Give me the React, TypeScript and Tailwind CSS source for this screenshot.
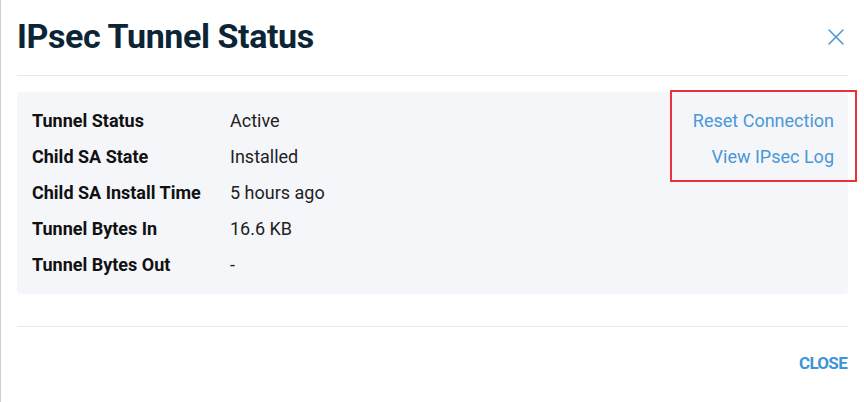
import { X } from "lucide-react";

const rows = [
  { label: "Tunnel Status", value: "Active" },
  { label: "Child SA State", value: "Installed" },
  { label: "Child SA Install Time", value: "5 hours ago" },
  { label: "Tunnel Bytes In", value: "16.6 KB" },
  { label: "Tunnel Bytes Out", value: "-" },
];

export default function App() {
  return (
    <div className="relative w-[864px] h-[402px] overflow-hidden bg-white border-l border-[#cfcfcf] font-['Roboto',sans-serif]">
      {/* Header */}
      <header className="mx-[16px] h-[76px] flex items-center justify-between border-b border-[#e8e9ec]">
        <h2 className="text-[34px] font-bold tracking-[-0.4px] text-[#0c2536] leading-none pb-[4px]">
          IPsec Tunnel Status
        </h2>
        <button className="-mr-[2px] text-[#4a98d6] pb-[2px]">
          <X className="w-[28px] h-[28px]" strokeWidth={1.3} />
        </button>
      </header>

      {/* Body */}
      <main className="mx-[16px] mt-[16px]">
        <div className="h-[202px] rounded-[4px] bg-[#f5f6fa] pl-[15px] pr-[14px] pt-[10px] flex justify-between">
          <dl className="flex flex-col">
            {rows.map((r) => (
              <div key={r.label} className="flex h-[36px] items-center text-[18px]">
                <dt className="w-[198px] font-bold text-[#111]">{r.label}</dt>
                <dd className="text-[#222]">{r.value}</dd>
              </div>
            ))}
          </dl>
          <div className="flex flex-col items-end text-[18px] text-[#4a98d6]">
            <a className="h-[36px] flex items-center">Reset Connection</a>
            <a className="h-[36px] flex items-center">View IPsec Log</a>
          </div>
        </div>
      </main>

      {/* Footer */}
      <footer className="mx-[16px] mt-[32px] border-t border-[#e8e9ec] h-[76px] flex items-center justify-end">
        <button className="text-[17px] font-bold tracking-[-0.7px] text-[#3d93d5] pb-[1px] pr-[1px]">CLOSE</button>
      </footer>

      {/* Highlight annotation */}
      <div className="absolute left-[669px] top-[90px] w-[187px] h-[92px] border-2 border-[#e8333a] pointer-events-none" />
    </div>
  );
}
